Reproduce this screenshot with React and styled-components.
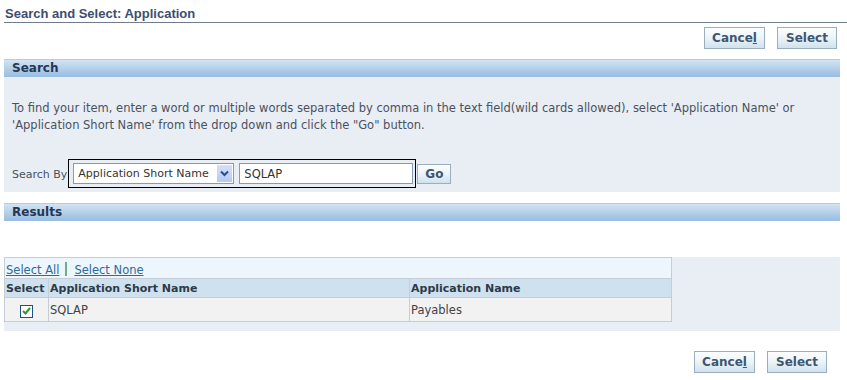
import React from 'react'
import styled, { createGlobalStyle } from 'styled-components'

const GlobalStyle = createGlobalStyle`
    body {
        margin: 0;
        background: #fff;
        font-family: "DejaVu Sans", Verdana, sans-serif;
        font-size: 11.5px;
        color: #3a3a3a;
    }
`;

const Page = styled.div`
    width: 847px;
    padding: 0 7px 0 4px;
    box-sizing: border-box;
`;

const Title = styled.h1`
    margin: 0 -7px 0 0;
    padding: 6px 0 1px 1px;
    font-family: "Liberation Sans", Arial, sans-serif;
    font-size: 13px;
    font-weight: bold;
    color: #3d4e6c;
    border-bottom: 1px solid #6e7c8c;
    line-height: 15px;
`;

const ButtonRow = styled.div`
    display: flex;
    justify-content: flex-end;
    gap: 12px;
    padding-right: ${({ inset }) => inset || 3}px;
    margin-top: ${({ top }) => top}px;
`;

const Button = styled.button`
    height: 22px;
    min-width: ${({ w }) => w || 60}px;
    padding: 0 7px;
    font-family: "DejaVu Sans", Verdana, sans-serif;
    font-size: 12px;
    font-weight: bold;
    color: #3f5670;
    background: linear-gradient(#fbfdfe, #eef5f9 45%, #cfe2ee);
    border: 1px solid #9aaebe;
    border-radius: 0;
    cursor: pointer;

    u {
        text-decoration: underline;
    }
`;

const SectionHeader = styled.div`
    margin-top: ${({ top }) => top}px;
    height: 18px;
    box-sizing: border-box;
    padding-left: 8px;
    border-top: 1px solid #b5cce2;
    background: linear-gradient(#d3e4f3, #b3cfea 50%, #98bde0);
    font-size: 12px;
    font-weight: bold;
    line-height: 17px;
    color: #253755;
`;

const SectionBody = styled.div`
    background: #e9edf4;
    padding: ${({ pad }) => pad};
`;

const Hint = styled.p`
    margin: 0;
    padding-left: 8px;
    line-height: 17px;
    color: #4a5260;
`;

const SearchRow = styled.div`
    display: flex;
    align-items: center;
    margin-top: 25px;
    padding-left: 8px;
`;

const Label = styled.span`
    color: #4a5260;
    font-size: 11px;
    padding-top: 2px;
`;

const FocusBox = styled.div`
    display: flex;
    align-items: center;
    gap: 5px;
    height: 29px;
    box-sizing: border-box;
    padding: 0 2px 0 4px;
    border: 1px solid #000;
    margin-left: 1px;
`;

const Select = styled.div`
    display: flex;
    align-items: center;
    justify-content: space-between;
    width: 161px;
    height: 21px;
    box-sizing: border-box;
    border: 1px solid #7f9db9;
    background: #fff;
    padding: 0 1px 0 4px;
    color: #333;
    white-space: nowrap;
    font-size: 11px;
`;

const Arrow = styled.span`
    display: flex;
    align-items: center;
    justify-content: center;
    flex: none;
    width: 15px;
    height: 17px;
    background: linear-gradient(#d6e0fb, #b6c8f6);
`;

const Input = styled.div`
    width: 174px;
    height: 21px;
    box-sizing: border-box;
    border: 1px solid #7f9db9;
    background: #fff;
    padding: 3px 4px 0;
    color: #333;
`;

const GoButton = styled(Button)`
    height: 20px;
    min-width: 34px;
    margin-left: 1px;
    padding: 0 6px;
`;

const Table = styled.table`
    width: 668px;
    margin-top: 36px;
    border-collapse: collapse;
    border: 1px solid #c5ced8;
`;

const ActionsCell = styled.td`
    background: #eef6fd;
    padding: 4px 1px 1px;
    height: 14px;
    color: #2c6a99;

    a {
        color: #2c6a99;
        text-decoration: underline;
    }
`;

const Pipe = styled.span`
    display: inline-block;
    width: 2px;
    height: 14px;
    margin: 0 7px 0 6px;
    background: #6fae8a;
    vertical-align: -2px;
`;

const Th = styled.th`
    text-align: left;
    background: #cfe0ee;
    color: #2d3a48;
    font-weight: bold;
    font-size: 11px;
    padding: 2px 1px 2px 1px;
    height: 14px;
    border-left: 1px solid #c5ced8;
    border-top: 1px solid #c5ced8;
    width: ${({ w }) => (w ? `${w}px` : 'auto')};
`;

const Td = styled.td`
    background: #f3f2f2;
    color: #404448;
    padding: 4px 1px 3px;
    height: 15px;
    border-left: 1px solid #c5ced8;
    border-top: 1px solid #c5ced8;
    text-align: ${({ center }) => (center ? 'center' : 'left')};
`;

const Check = styled.span`
    display: inline-flex;
    align-items: center;
    justify-content: center;
    width: 11px;
    height: 11px;
    border: 1px solid #1c5180;
    background: #fff;
    vertical-align: -2px;
`;

function SearchSelect() {
    return (
        <Page>
            <Title>Search and Select: Application</Title>
            <ButtonRow top={4}>
                <Button w={61}>Cance<u>l</u></Button>
                <Button w={60}>Select</Button>
            </ButtonRow>

            <SectionHeader top={10}>Search</SectionHeader>
            <SectionBody pad="23px 0 4px">
                <Hint>
                    To find your item, enter a word or multiple words separated by comma in the text field(wild cards allowed), select 'Application Name' or
                    <br />
                    'Application Short Name' from the drop down and click the "Go" button.
                </Hint>
                <SearchRow>
                    <Label>Search By</Label>
                    <FocusBox>
                        <Select>
                            <span>Application Short Name</span>
                            <Arrow>
                                <svg width="9" height="7" viewBox="0 0 9 7">
                                    <path d="M1 1.5 L4.5 5 L8 1.5" fill="none" stroke="#2a4d8f" strokeWidth="2" />
                                </svg>
                            </Arrow>
                        </Select>
                        <Input>SQLAP</Input>
                    </FocusBox>
                    <GoButton>Go</GoButton>
                </SearchRow>
            </SectionBody>

            <SectionHeader top={11}>Results</SectionHeader>
            <SectionBody pad="0 0 9px">
                <Table>
                    <tbody>
                        <tr>
                            <ActionsCell colSpan={3}>
                                <a>Select All</a>
                                <Pipe />
                                <a>Select None</a>
                            </ActionsCell>
                        </tr>
                        <tr>
                            <Th w={41}>Select</Th>
                            <Th w={358}>Application Short Name</Th>
                            <Th>Application Name</Th>
                        </tr>
                        <tr>
                            <Td center>
                                <Check>
                                    <svg width="9" height="8" viewBox="0 0 9 8">
                                        <path d="M1 4 L3.5 6.5 L8 1" fill="none" stroke="#2f9a2a" strokeWidth="2" />
                                    </svg>
                                </Check>
                            </Td>
                            <Td>SQLAP</Td>
                            <Td>Payables</Td>
                        </tr>
                    </tbody>
                </Table>
            </SectionBody>

            <ButtonRow top={20} inset={13}>
                <Button w={61}>Cance<u>l</u></Button>
                <Button w={60}>Select</Button>
            </ButtonRow>
        </Page>
    )
}

export default function App() {
    return (
        <>
            <GlobalStyle />
            <SearchSelect />
        </>
    )
}
